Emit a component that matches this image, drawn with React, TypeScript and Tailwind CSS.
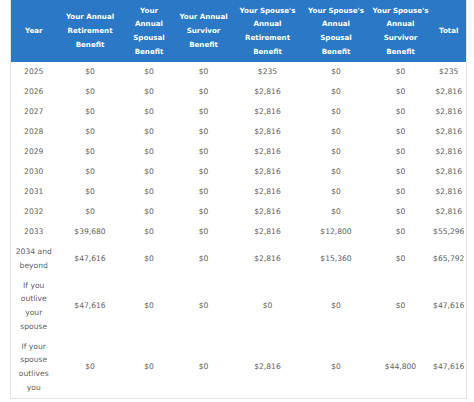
const headers: string[][] = [
  ["Year"],
  ["Your Annual", "Retirement", "Benefit"],
  ["Your", "Annual", "Spousal", "Benefit"],
  ["Your Annual", "Survivor", "Benefit"],
  ["Your Spouse's", "Annual", "Retirement", "Benefit"],
  ["Your Spouse's", "Annual", "Spousal", "Benefit"],
  ["Your Spouse's", "Annual", "Survivor", "Benefit"],
  ["Total"],
];

const widths = [46, 67, 51, 58, 70, 67, 62, 35];

const rows: { label: string[]; values: string[] }[] = [
  { label: ["2025"], values: ["$0", "$0", "$0", "$235", "$0", "$0", "$235"] },
  { label: ["2026"], values: ["$0", "$0", "$0", "$2,816", "$0", "$0", "$2,816"] },
  { label: ["2027"], values: ["$0", "$0", "$0", "$2,816", "$0", "$0", "$2,816"] },
  { label: ["2028"], values: ["$0", "$0", "$0", "$2,816", "$0", "$0", "$2,816"] },
  { label: ["2029"], values: ["$0", "$0", "$0", "$2,816", "$0", "$0", "$2,816"] },
  { label: ["2030"], values: ["$0", "$0", "$0", "$2,816", "$0", "$0", "$2,816"] },
  { label: ["2031"], values: ["$0", "$0", "$0", "$2,816", "$0", "$0", "$2,816"] },
  { label: ["2032"], values: ["$0", "$0", "$0", "$2,816", "$0", "$0", "$2,816"] },
  { label: ["2033"], values: ["$39,680", "$0", "$0", "$2,816", "$12,800", "$0", "$55,296"] },
  { label: ["2034 and", "beyond"], values: ["$47,616", "$0", "$0", "$2,816", "$15,360", "$0", "$65,792"] },
  {
    label: ["If you", "outlive", "your", "spouse"],
    values: ["$47,616", "$0", "$0", "$0", "$0", "$0", "$47,616"],
  },
  {
    label: ["If your", "spouse", "outlives", "you"],
    values: ["$0", "$0", "$0", "$2,816", "$0", "$44,800", "$47,616"],
  },
];

function Lines({ lines }: { lines: string[] }) {
  return (
    <>
      {lines.map((l, i) => (
        <span key={i} className="block whitespace-nowrap">
          {l}
        </span>
      ))}
    </>
  );
}

export default function App() {
  return (
    <div className="h-[402px] w-[474px] overflow-hidden bg-white pl-[10px] font-['DejaVu_Sans',Verdana,sans-serif]">
      <table className="w-[456px] table-fixed border-collapse border-x border-b border-[#e4e4e4]">
        <colgroup>
          {widths.map((w, i) => (
            <col key={i} style={{ width: w }} />
          ))}
        </colgroup>
        <thead>
          <tr className="bg-[#2b78c6]">
            {headers.map((h, i) => (
              <th
                key={i}
                className="px-0 py-[3.5px] text-center align-middle text-[7.1px] font-bold leading-[13.7px] text-white"
              >
                <Lines lines={h} />
              </th>
            ))}
          </tr>
        </thead>
        <tbody>
          {rows.map((r, i) => (
            <tr key={i}>
              <td className="px-0 py-[3.15px] text-center align-middle text-[7.6px] leading-[13.7px] text-[#5f5f5f]">
                <Lines lines={r.label} />
              </td>
              {r.values.map((v, j) => (
                <td
                  key={j}
                  className="px-0 py-[3.15px] text-center align-middle text-[7.6px] leading-[13.7px] text-[#5f5f5f]"
                >
                  {v}
                </td>
              ))}
            </tr>
          ))}
        </tbody>
      </table>
    </div>
  );
}
